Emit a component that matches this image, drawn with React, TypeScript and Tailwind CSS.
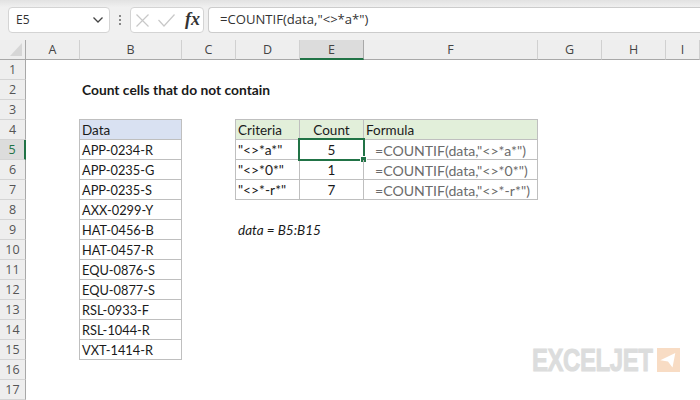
const cols = ["A", "B", "C", "D", "E", "F", "G", "H", "I"];
const rows = Array.from({ length: 17 }, (_, i) => i + 1);
const data = ["APP-0234-R", "APP-0235-G", "APP-0235-S", "AXX-0299-Y", "HAT-0456-B", "HAT-0457-R", "EQU-0876-S", "EQU-0877-S", "RSL-0933-F", "RSL-1044-R", "VXT-1414-R"];
const crit = [
  ['"<>*a*"', "5", '=COUNTIF(data,"<>*a*")'],
  ['"<>*0*"', "1", '=COUNTIF(data,"<>*0*")'],
  ['"<>*-r*"', "7", '=COUNTIF(data,"<>*-r*")'],
];
const cell = "border-r border-b border-[#bfbfbf] flex items-center pt-[2px]";

export default function App() {
  return (
    <div className="w-[700px] h-[400px] overflow-hidden bg-white flex flex-col relative font-['Lato',sans-serif] text-[#1a1a1a]">
      <div className="h-[40px] bg-linear-to-b from-[#e2e2e2] to-[#f0f0f0] to-[18%] flex items-start pt-[7px] pl-[8px] gap-[3px]">
        <div className="w-[102px] h-[26px] bg-white border border-[#d4d4d4] rounded-[4px] flex items-center justify-between pl-[7px] pr-[5px] font-['Open_Sans',sans-serif] text-[12px] text-[#333]">
          <span>E5</span>
          <svg width="12" height="8" viewBox="0 0 12 8" fill="none" stroke="#444" strokeWidth="1.3"><path d="M1.5 1.5 L6 6 L10.5 1.5" /></svg>
        </div>
        <div className="w-[14px] h-[26px] flex flex-col items-center justify-center gap-[2px]">
          <i className="w-[2px] h-[2px] bg-[#888]" />
          <i className="w-[2px] h-[2px] bg-[#888]" />
          <i className="w-[2px] h-[2px] bg-[#888]" />
        </div>
        <div className="w-[74px] h-[26px] bg-white border border-[#d4d4d4] rounded-[4px] flex items-center pl-[5px] gap-[9px]">
          <svg width="13" height="13" viewBox="0 0 13 13" fill="none" stroke="#c8c8c8" strokeWidth="1.2"><path d="M0.5 0.5 L12.5 12.5 M12.5 0.5 L0.5 12.5" /></svg>
          <svg width="17" height="13" viewBox="0 0 17 13" fill="none" stroke="#c8c8c8" strokeWidth="1.2"><path d="M0.5 6 L6 12 L16.5 0.5" /></svg>
          <span className="font-['Liberation_Serif',serif] italic font-bold text-[18px] text-[#333] leading-none ml-[1px] -mt-[2px]">fx</span>
        </div>
        <div className="flex-1 ml-[1px] h-[26px] bg-white border-y border-l border-[#cccccc] rounded-l-[4px] flex items-center pl-[11px] font-['Open_Sans',sans-serif] text-[13.1px] text-[#333]">
          =COUNTIF(data,"&lt;&gt;*a*")
        </div>
      </div>

      <div className="grid flex-1 grid-cols-[26px_54px_102px_54px_64px_64px_174px_64px_64px_34px] grid-rows-[20px_repeat(17,20px)] text-[13.5px]">
        <div className="bg-[#eeeeee] border-r border-b border-[#a8a8a8] flex items-end justify-end p-[3px]">
          <div className="w-0 h-0 border-l-[12px] border-l-transparent border-b-[13px] border-b-[#d6d6d6]" />
        </div>
        {cols.map((c) => (
          <div key={c} className={`flex items-center justify-center pt-[2px] text-[#444] font-['Open_Sans',sans-serif] text-[12.5px] border-b ${c === "E" ? "bg-[#dcdcdc] border-b-2 border-b-[#217346] border-r border-r-[#a8a8a8]" : "bg-[#eeeeee] border-b-[#a8a8a8] border-r border-r-[#d0d0d0]"}`}>{c}</div>
        ))}
        {rows.map((r) => (
          <div key={r} style={{ gridRow: r + 1, gridColumn: 1 }} className={`flex items-center justify-center pt-[2px] font-['Open_Sans',sans-serif] text-[12.5px] border-b border-b-[#d4d4d4] ${r === 5 ? "bg-[#dcdcdc] text-[#217346] border-r-2 border-r-[#217346]" : "bg-[#eeeeee] text-[#555] border-r border-r-[#a8a8a8]"}`}>{r}</div>
        ))}

        <div className="row-start-3 col-start-3 col-span-4 flex items-center pl-[2px] font-bold text-[13.8px]">Count cells that do not contain</div>

        <div className="row-start-5 col-start-3 -ml-px -mt-px bg-[#d9e1f2] border border-[#bfbfbf] flex items-center pl-[2px] pt-[2px]">Data</div>
        {data.map((d, i) => (
          <div key={d} style={{ gridRow: i + 6, gridColumn: 3 }} className={`${cell} -ml-px border-l pl-[2px] text-[12.8px]`}>{d}</div>
        ))}

        <div className="row-start-5 col-start-5 -ml-px -mt-px bg-[#e2efda] border border-[#bfbfbf] flex items-center pl-[2px] pt-[2px]">Criteria</div>
        <div className="row-start-5 col-start-6 -mt-px bg-[#e2efda] border-y border-r border-[#bfbfbf] flex items-center justify-center pt-[2px]">Count</div>
        <div className="row-start-5 col-start-7 -mt-px bg-[#e2efda] border-y border-r border-[#bfbfbf] flex items-center pl-[2px] pt-[2px]">Formula</div>
        {crit.map((c, i) => [
          <div key={c[0]} style={{ gridRow: i + 6, gridColumn: 5 }} className={`${cell} -ml-px border-l pl-[2px] text-[13.8px]`}>{c[0]}</div>,
          <div key={c[1]} style={{ gridRow: i + 6, gridColumn: 6 }} className={`${cell} justify-center relative`}>
            {c[1]}
            {i === 0 && (
              <div className="absolute -left-[2px] -top-[2px] w-[67px] h-[23px] border-2 border-[#217346]">
                <div className="absolute -right-[4px] -bottom-[4px] w-[7px] h-[7px] bg-[#217346] border border-white" />
              </div>
            )}
          </div>,
          <div key={c[2]} style={{ gridRow: i + 6, gridColumn: 7 }} className={`${cell} pl-[11px] text-[14.1px] text-[#6b6b6b]`}>{c[2]}</div>,
        ])}

        <div className="row-start-[10] col-start-5 col-span-2 flex items-center pl-[2px] italic pt-[1px]">data = B5:B15</div>
      </div>

      <div className="absolute left-[532px] top-[348px] flex items-center">
        <span className="w-[125px] h-[24px] flex items-center origin-left scale-x-[0.75] font-['Liberation_Sans',sans-serif] font-bold text-[32px] leading-none tracking-[-0.6px] text-[#dcdddd] [-webkit-text-stroke:1px_#dcdddd]">EXCELJET</span>
        <svg width="23" height="24" viewBox="0 0 23 24"><rect width="23" height="24" fill="#f8dcc4" /><path d="M3.3 12.3 L18.3 5 L15.5 19.5 L11 13.5 Z" fill="#fff" /></svg>
      </div>
    </div>
  );
}
